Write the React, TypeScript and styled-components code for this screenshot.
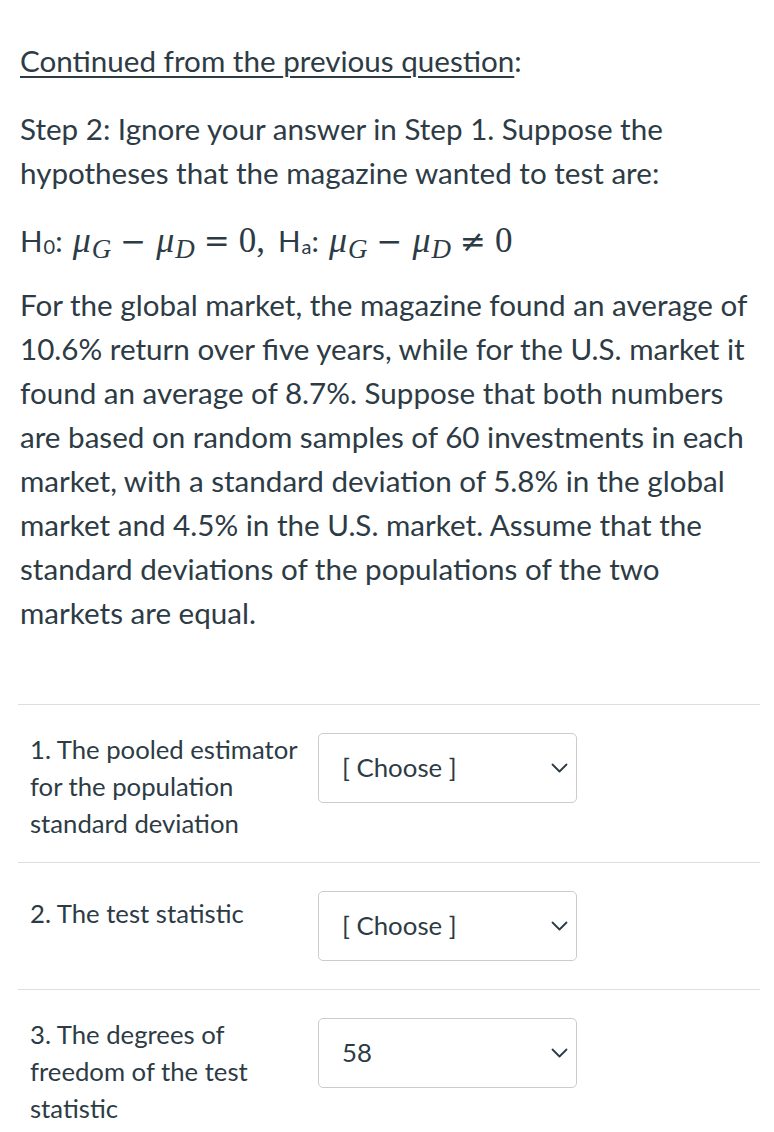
import styled, { createGlobalStyle } from 'styled-components';

const GlobalStyle = createGlobalStyle`
  html, body {
    margin: 0;
    padding: 0;
    background: #fff;
  }
  body {
    font-family: Lato, "Open Sans", sans-serif;
    color: #2d3b45;
  }
`;

interface IRow {
  label: string;
  value: string;
  single?: boolean;
}

const rows: IRow[] = [
  { label: '1. The pooled estimator for the population standard deviation', value: '[ Choose ]' },
  { label: '2. The test statistic', value: '[ Choose ]', single: true },
  { label: '3. The degrees of freedom of the test statistic', value: '58' },
];

function Mu({ sub }: { sub: string }) {
  return (
    <MuVar>
      μ<MuSub>{sub}</MuSub>
    </MuVar>
  );
}

function Chevron() {
  return (
    <svg width="17" height="10" viewBox="0 0 17 10" fill="none">
      <path d="M1.5 1.5 L8.5 8.5 L15.5 1.5" stroke="#2d3b45" strokeWidth="1.8" strokeLinecap="round" strokeLinejoin="round" />
    </svg>
  );
}

function App() {
  return (
    <Page>
      <GlobalStyle />
      <Para>
        <Under>Continued from the </Under>
        <Under>previous question</Under>:
      </Para>
      <Para>Step 2: Ignore your answer in Step 1. Suppose the hypotheses that the magazine wanted to test are:</Para>
      <MathLine>
        H<Sub>0</Sub>:<Mu sub="G" />
        <Op>−</Op>
        <Mu sub="D" />
        <Op>=</Op>
        <Num>0,</Num>
        <Gap />H<Sub>a</Sub>:<Mu sub="G" />
        <Op>−</Op>
        <Mu sub="D" />
        <Op>≠</Op>
        <Num>0</Num>
      </MathLine>
      <Para>
        For the global market, the magazine found an average of 10.6% return over five years, while for the U.S. market it
        found an average of 8.7%. Suppose that both numbers are based on random samples of 60 investments in each market,
        with a standard deviation of 5.8% in the global market and 4.5% in the U.S. market. Assume that the standard
        deviations of the populations of the two markets are equal.
      </Para>
      <Answers>
        {rows.map((row) => (
          <Row key={row.label}>
            <Label $single={row.single}>{row.label}</Label>
            <Select>
              <span>{row.value}</span>
              <Chevron />
            </Select>
          </Row>
        ))}
      </Answers>
    </Page>
  );
}

const Page = styled.div`
  padding: 39px 0 0 20px;
  width: 734px;
`;

const Para = styled.p`
  margin: 0 0 24px;
  font-size: 29.6px;
  line-height: 44px;
`;

const Under = styled.span`
  text-decoration: underline;
  text-underline-offset: 4px;
  text-decoration-thickness: 2px;
`;

const MathLine = styled.p`
  margin: 0 0 20px;
  height: 44px;
  font-size: 29.6px;
  line-height: 44px;
  white-space: nowrap;
  & > span {
    line-height: 0;
  }
`;

const Sub = styled.sub`
  font-size: 20px;
  vertical-align: -2px;
  line-height: 0;
  margin-left: 1px;
`;

const Gap = styled.span`
  display: inline-block;
  width: 13px;
`;

const MuVar = styled.span`
  font-family: "Liberation Serif", "DejaVu Serif", serif;
  font-style: italic;
  font-size: 36px;
  margin-left: 10px;
`;

const MuSub = styled.span`
  font-size: 27px;
  vertical-align: -6px;
  line-height: 0;
  margin-left: 1px;
`;

const Op = styled.span`
  font-family: "DejaVu Serif", "Liberation Serif", serif;
  font-size: 31px;
  margin: 0 0 0 9px;
`;

const Num = styled.span`
  font-family: "Liberation Serif", "DejaVu Serif", serif;
  font-size: 35px;
  margin-left: 9px;
`;

const Answers = styled.div`
  margin: 69px -6px 0 -2px;
  border-top: 1px solid #dcdfe1;
`;

const Row = styled.div`
  display: flex;
  align-items: flex-start;
  gap: 12px;
  padding: 28px 0 20px 12px;
  border-bottom: 1px solid #dcdfe1;
  &:last-child {
    border-bottom: none;
  }
`;

const Label = styled.div<{ $single?: boolean }>`
  width: 276px;
  font-size: 25.7px;
  line-height: 37px;
  margin-top: ${(props) => (props.$single ? '4px' : '-2px')};
`;

const Select = styled.div`
  box-sizing: border-box;
  width: 259px;
  height: 70px;
  margin-bottom: 8px;
  display: flex;
  align-items: center;
  justify-content: space-between;
  padding: 0 8px 0 23px;
  border: 1px solid #c7cdd1;
  border-radius: 5px;
  font-size: 25.8px;
  color: #2d3b45;
  span {
    margin-top: -2px;
  }
`;

export default App;
